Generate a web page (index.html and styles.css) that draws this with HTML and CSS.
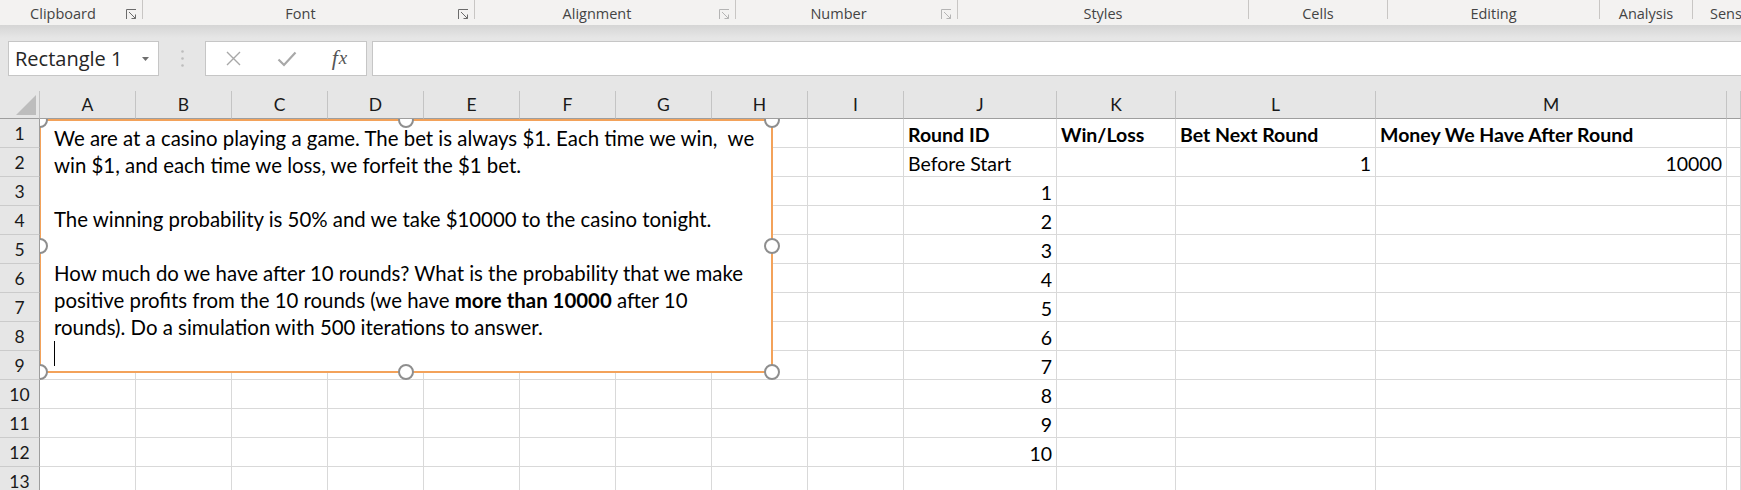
FILE: index.html
```
<!DOCTYPE html>
<html lang="en">
<head>
    <meta charset="UTF-8">
    <title>Casino simulation</title>
    <link rel="stylesheet" href="styles.css">
</head>
<body>
    <div class="ribbon">
        <div class="group g-clip">
            <span class="label">Clipboard</span>
            <svg class="launcher" viewBox="0 0 11 11"><path d="M.5 10V.5H10M3 3l6.5 6.5M9.5 5.5v4H5.5" fill="none" stroke="#6b6b6b"/></svg>
        </div>
        <i class="sep"></i>
        <div class="group g-font">
            <span class="label">Font</span>
            <svg class="launcher" viewBox="0 0 11 11"><path d="M.5 10V.5H10M3 3l6.5 6.5M9.5 5.5v4H5.5" fill="none" stroke="#6b6b6b"/></svg>
        </div>
        <i class="sep"></i>
        <div class="group g-align">
            <span class="label">Alignment</span>
            <svg class="launcher" viewBox="0 0 11 11"><path d="M.5 10V.5H10M3 3l6.5 6.5M9.5 5.5v4H5.5" fill="none" stroke="#b4b4b4"/></svg>
        </div>
        <i class="sep"></i>
        <div class="group g-num">
            <span class="label">Number</span>
            <svg class="launcher" viewBox="0 0 11 11"><path d="M.5 10V.5H10M3 3l6.5 6.5M9.5 5.5v4H5.5" fill="none" stroke="#b4b4b4"/></svg>
        </div>
        <i class="sep"></i>
        <div class="group g-styles"><span class="label">Styles</span></div>
        <i class="sep"></i>
        <div class="group g-cells"><span class="label">Cells</span></div>
        <i class="sep"></i>
        <div class="group g-edit"><span class="label">Editing</span></div>
        <i class="sep"></i>
        <div class="group g-anal"><span class="label">Analysis</span></div>
        <i class="sep"></i>
        <div class="group g-sens"><span class="label">Sensitivity</span></div>
    </div>

    <div class="formula-bar">
        <div class="namebox">
            <span>Rectangle 1</span>
            <svg class="caret" viewBox="0 0 7 4"><path d="M0 0h7L3.5 4z" fill="#6e6e6e"/></svg>
        </div>
        <div class="grip">
            <svg viewBox="0 0 3 17"><circle cx="1.5" cy="1.5" r="1.3"/><circle cx="1.5" cy="8.5" r="1.3"/><circle cx="1.5" cy="15.5" r="1.3"/></svg>
        </div>
        <div class="fx-buttons">
            <span class="slot"><svg width="15" height="15" viewBox="0 0 15 15"><path d="M1 1l13 13M14 1L1 14" stroke="#a8a8a8" stroke-width="1.4"/></svg></span>
            <span class="slot"><svg width="20" height="16" viewBox="0 0 20 16"><path d="M1.5 8.5l5.5 5.5L18.5 1.5" fill="none" stroke="#a8a8a8" stroke-width="2.2"/></svg></span>
            <span class="slot fx"><i>f</i><i>x</i></span>
        </div>
        <div class="formula-input"></div>
    </div>

    <div class="sheet">
        <div class="corner"><div class="tri"></div></div>
        <div class="ch">A</div><div class="ch">B</div><div class="ch">C</div><div class="ch">D</div><div class="ch">E</div><div class="ch">F</div><div class="ch">G</div><div class="ch">H</div><div class="ch">I</div><div class="ch">J</div><div class="ch">K</div><div class="ch">L</div><div class="ch">M</div><div class="ch"></div>

        <div class="rh">1</div>
        <div class="c"></div><div class="c"></div><div class="c"></div><div class="c"></div><div class="c"></div><div class="c"></div><div class="c"></div><div class="c"></div><div class="c"></div>
        <div class="c b">Round ID</div><div class="c b">Win/Loss</div><div class="c b">Bet Next Round</div><div class="c b">Money We Have After Round</div><div class="c"></div>

        <div class="rh">2</div>
        <div class="c"></div><div class="c"></div><div class="c"></div><div class="c"></div><div class="c"></div><div class="c"></div><div class="c"></div><div class="c"></div><div class="c"></div>
        <div class="c">Before Start</div><div class="c"></div><div class="c num">1</div><div class="c num">10000</div><div class="c"></div>

        <div class="rh">3</div>
        <div class="c"></div><div class="c"></div><div class="c"></div><div class="c"></div><div class="c"></div><div class="c"></div><div class="c"></div><div class="c"></div><div class="c"></div>
        <div class="c num">1</div><div class="c"></div><div class="c"></div><div class="c"></div><div class="c"></div>

        <div class="rh">4</div>
        <div class="c"></div><div class="c"></div><div class="c"></div><div class="c"></div><div class="c"></div><div class="c"></div><div class="c"></div><div class="c"></div><div class="c"></div>
        <div class="c num">2</div><div class="c"></div><div class="c"></div><div class="c"></div><div class="c"></div>

        <div class="rh">5</div>
        <div class="c"></div><div class="c"></div><div class="c"></div><div class="c"></div><div class="c"></div><div class="c"></div><div class="c"></div><div class="c"></div><div class="c"></div>
        <div class="c num">3</div><div class="c"></div><div class="c"></div><div class="c"></div><div class="c"></div>

        <div class="rh">6</div>
        <div class="c"></div><div class="c"></div><div class="c"></div><div class="c"></div><div class="c"></div><div class="c"></div><div class="c"></div><div class="c"></div><div class="c"></div>
        <div class="c num">4</div><div class="c"></div><div class="c"></div><div class="c"></div><div class="c"></div>

        <div class="rh">7</div>
        <div class="c"></div><div class="c"></div><div class="c"></div><div class="c"></div><div class="c"></div><div class="c"></div><div class="c"></div><div class="c"></div><div class="c"></div>
        <div class="c num">5</div><div class="c"></div><div class="c"></div><div class="c"></div><div class="c"></div>

        <div class="rh">8</div>
        <div class="c"></div><div class="c"></div><div class="c"></div><div class="c"></div><div class="c"></div><div class="c"></div><div class="c"></div><div class="c"></div><div class="c"></div>
        <div class="c num">6</div><div class="c"></div><div class="c"></div><div class="c"></div><div class="c"></div>

        <div class="rh">9</div>
        <div class="c"></div><div class="c"></div><div class="c"></div><div class="c"></div><div class="c"></div><div class="c"></div><div class="c"></div><div class="c"></div><div class="c"></div>
        <div class="c num">7</div><div class="c"></div><div class="c"></div><div class="c"></div><div class="c"></div>

        <div class="rh">10</div>
        <div class="c"></div><div class="c"></div><div class="c"></div><div class="c"></div><div class="c"></div><div class="c"></div><div class="c"></div><div class="c"></div><div class="c"></div>
        <div class="c num">8</div><div class="c"></div><div class="c"></div><div class="c"></div><div class="c"></div>

        <div class="rh">11</div>
        <div class="c"></div><div class="c"></div><div class="c"></div><div class="c"></div><div class="c"></div><div class="c"></div><div class="c"></div><div class="c"></div><div class="c"></div>
        <div class="c num">9</div><div class="c"></div><div class="c"></div><div class="c"></div><div class="c"></div>

        <div class="rh">12</div>
        <div class="c"></div><div class="c"></div><div class="c"></div><div class="c"></div><div class="c"></div><div class="c"></div><div class="c"></div><div class="c"></div><div class="c"></div>
        <div class="c num">10</div><div class="c"></div><div class="c"></div><div class="c"></div><div class="c"></div>

        <div class="rh">13</div>
        <div class="c"></div><div class="c"></div><div class="c"></div><div class="c"></div><div class="c"></div><div class="c"></div><div class="c"></div><div class="c"></div><div class="c"></div>
        <div class="c"></div><div class="c"></div><div class="c"></div><div class="c"></div><div class="c"></div>

        <!-- the text box sits over A1:H9 -->
        <div class="shape">
            <p>We are at a casino playing a game. The bet is always $1. Each time we win,&nbsp; we<br>win $1, and each time we loss, we forfeit the $1 bet.<br><br>The winning probability is 50% and we take $10000 to the casino tonight.<br><br>How much do we have after 10 rounds? What is the probability that we make<br>positive profits from the 10 rounds (we have <b>more than 10000</b> after 10<br>rounds). Do a simulation with 500 iterations to answer.<br><span class="cursor"></span></p>
            <span class="handle tl"></span>
            <span class="handle tm"></span>
            <span class="handle tr"></span>
            <span class="handle ml"></span>
            <span class="handle mr"></span>
            <span class="handle bl"></span>
            <span class="handle bm"></span>
            <span class="handle br"></span>
        </div>
    </div>
</body>
</html>
```

FILE: styles.css
```
body {
    margin: 0;
    width: 1741px;
    height: 490px;
    overflow: hidden;
    background-color: #e6e6e6;
    font-family: 'Lato', sans-serif;
    color: #000;
}

/* ribbon group captions */
.ribbon {
    display: flex;
    height: 25px;
    overflow: hidden;
    background-color: #f3f2f1;
    font-family: 'Open Sans', sans-serif;
    font-size: 14.5px;
    color: #444;
    white-space: nowrap;
}

.group {
    display: flex;
    flex-shrink: 0;
    align-items: center;
    height: 25px;
}

.group .label {
    flex: 1;
    text-align: center;
    padding-top: 1px;
}

.launcher {
    width: 11px;
    height: 11px;
    margin: 3px 5px 0 0;
}

.sep {
    flex-shrink: 0;
    width: 1px;
    height: 19px;
    background-color: #c8c6c4;
}

.g-clip { width: 142px; }
.g-font { width: 331px; }
.g-align { width: 260px; }
.g-num { width: 221px; }
.g-styles { width: 290px; }
.g-cells { width: 138px; }
.g-edit { width: 211px; }
.g-anal { width: 92px; }
.g-sens { padding-left: 17px; }

/* name box + formula bar */
.formula-bar {
    display: flex;
    height: 66px;
    box-sizing: border-box;
    padding-top: 16px;
    background: linear-gradient(to bottom, #d5d5d5 0, #e6e6e6 13px, #e6e6e6 100%);
}

.namebox {
    display: flex;
    align-items: center;
    justify-content: space-between;
    width: 151px;
    height: 35px;
    box-sizing: border-box;
    margin-left: 8px;
    padding: 0 9px 0 6px;
    background-color: #fff;
    border: 1px solid #c6c6c6;
    font-family: 'Open Sans', sans-serif;
    font-size: 20px;
    color: #262626;
    white-space: nowrap;
}

.caret {
    width: 7px;
    height: 4px;
}

.grip {
    display: flex;
    justify-content: center;
    align-items: center;
    width: 46px;
    height: 35px;
}

.grip svg {
    width: 3px;
    height: 17px;
    fill: #bdbdbd;
}

.fx-buttons {
    display: flex;
    width: 162px;
    height: 35px;
    box-sizing: border-box;
    padding-left: 1px;
    background-color: #fff;
    border: 1px solid #c6c6c6;
}

.slot {
    display: flex;
    justify-content: center;
    align-items: center;
    width: 53px;
}

.fx {
    font-family: 'Liberation Serif', serif;
    font-size: 22px;
    color: #555;
    padding-bottom: 2px;
}

.fx i + i {
    font-size: 19px;
    margin-left: 1px;
}

.formula-input {
    flex: 1;
    height: 35px;
    box-sizing: border-box;
    margin-left: 5px;
    background-color: #fff;
    border: 1px solid #c6c6c6;
    border-right: none;
}

/* worksheet grid */
.sheet {
    position: relative;
    display: grid;
    grid-template-columns: 40px repeat(9, 96px) 153px 119px 200px 351px 1fr;
    grid-template-rows: 28px;
    grid-auto-rows: 29px;
    background-color: #fff;
}

.corner {
    display: flex;
    justify-content: flex-end;
    align-items: flex-end;
    background-color: #e6e6e6;
    border-right: 1px solid #c4c4c4;
    border-bottom: 1px solid #9e9e9e;
    position: relative;
    z-index: 2;
}

.tri {
    width: 20px;
    height: 20px;
    margin: 0 3px 3px 0;
    background-color: #bdbdbd;
    clip-path: polygon(100% 0, 100% 100%, 0 100%);
}

.ch {
    position: relative;
    z-index: 2;
    background-color: #e6e6e6;
    border-right: 1px solid #c4c4c4;
    border-bottom: 1px solid #9e9e9e;
    text-align: center;
    font-size: 17.5px;
    line-height: 28px;
    color: #1a1a1a;
}

.rh {
    position: relative;
    z-index: 2;
    background-color: #e6e6e6;
    border-right: 1px solid #9e9e9e;
    border-bottom: 1px solid #cbcbcb;
    text-align: center;
    font-size: 17.5px;
    line-height: 29px;
    color: #1a1a1a;
}

.c {
    display: flex;
    align-items: flex-end;
    box-sizing: border-box;
    padding: 0 4px 1px;
    border-right: 1px solid #d9d9d9;
    border-bottom: 1px solid #d9d9d9;
    font-size: 19.5px;
    line-height: 23px;
    white-space: nowrap;
}

.c.b {
    font-weight: 700;
}

.c.num {
    justify-content: flex-end;
}

/* selected text box shape */
.shape {
    position: absolute;
    left: 39px;
    top: 28px;
    width: 734px;
    height: 254px;
    box-sizing: border-box;
    z-index: 1;
    background-color: #fff;
    border: 2px solid #f3a25a;
}

.shape p {
    margin: 0;
    padding: 4px 0 0 13px;
    font-size: 20.4px;
    line-height: 27px;
    white-space: nowrap;
}

.cursor {
    display: inline-block;
    width: 1px;
    height: 25px;
    vertical-align: top;
    background-color: #000;
}

.handle {
    position: absolute;
    width: 16px;
    height: 16px;
    box-sizing: border-box;
    border: 2.5px solid #8e8e8e;
    border-radius: 50%;
    background-color: #fff;
}

.tl { left: -9px; top: -9px; }
.tm { left: calc(50% - 8px); top: -9px; }
.tr { right: -9px; top: -9px; }
.ml { left: -9px; top: calc(50% - 8px); }
.mr { right: -9px; top: calc(50% - 8px); }
.bl { left: -9px; bottom: -9px; }
.bm { left: calc(50% - 8px); bottom: -9px; }
.br { right: -9px; bottom: -9px; }
```
